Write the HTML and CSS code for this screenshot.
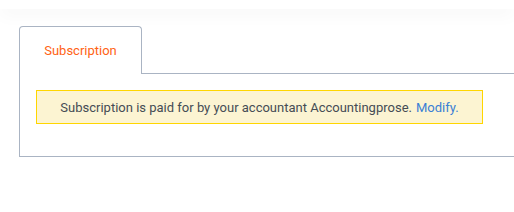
FILE: index.html
```html
<!DOCTYPE html>
<html>
<head>
<meta charset="utf-8">
<title>Subscription</title>
<link rel="stylesheet" href="styles.css">
</head>
<body>

<div class="topbar"></div>

<div class="page">
  <div class="tabs">
    <div class="tab active">Subscription</div>
    <div class="tab-rest"></div>
  </div>
  <div class="panel">
    <div class="notice">
      Subscription is paid for by your accountant Accountingprose. <a href="#">Modify.</a>
    </div>
  </div>
</div>

</body>
</html>
```

FILE: styles.css
```css
html,body,div{margin:0;padding:0;}
*{box-sizing:border-box;}
body{
  font-family:Roboto,"Liberation Sans",Arial,sans-serif;
  font-size:13px;
  color:#454c55;
  background:#fff;
}
.topbar{
  height:9px;
  background:#fff;
  box-shadow:0 4px 18px rgba(0,0,0,0.05);
}
/* panel runs on past the right edge, so no right border */
.page{
  padding:17px 0 0 19px;
}
.tabs{display:flex;align-items:flex-end;}
.tab{
  width:123px;
  height:48px;
  display:flex;
  align-items:center;
  justify-content:center;
  border:1px solid #aab4c3;
  border-bottom:none;
  border-radius:4px 4px 0 0;
  background:#fff;
}
.tab.active{color:#ff6314;}
.tab-rest{flex:1;border-bottom:1px solid #aab4c3;}
.panel{
  border-left:1px solid #aab4c3;
  border-bottom:1px solid #aab4c3;
  padding:16px 0 32px 16px;
}
.notice{
  width:447px;
  height:34px;
  display:flex;
  align-items:center;
  justify-content:center;
  background:#fcf4d2;
  border:1px solid #ffd600;
}
.notice a{color:#3a7fd5;text-decoration:none;margin-left:4px;}
```
